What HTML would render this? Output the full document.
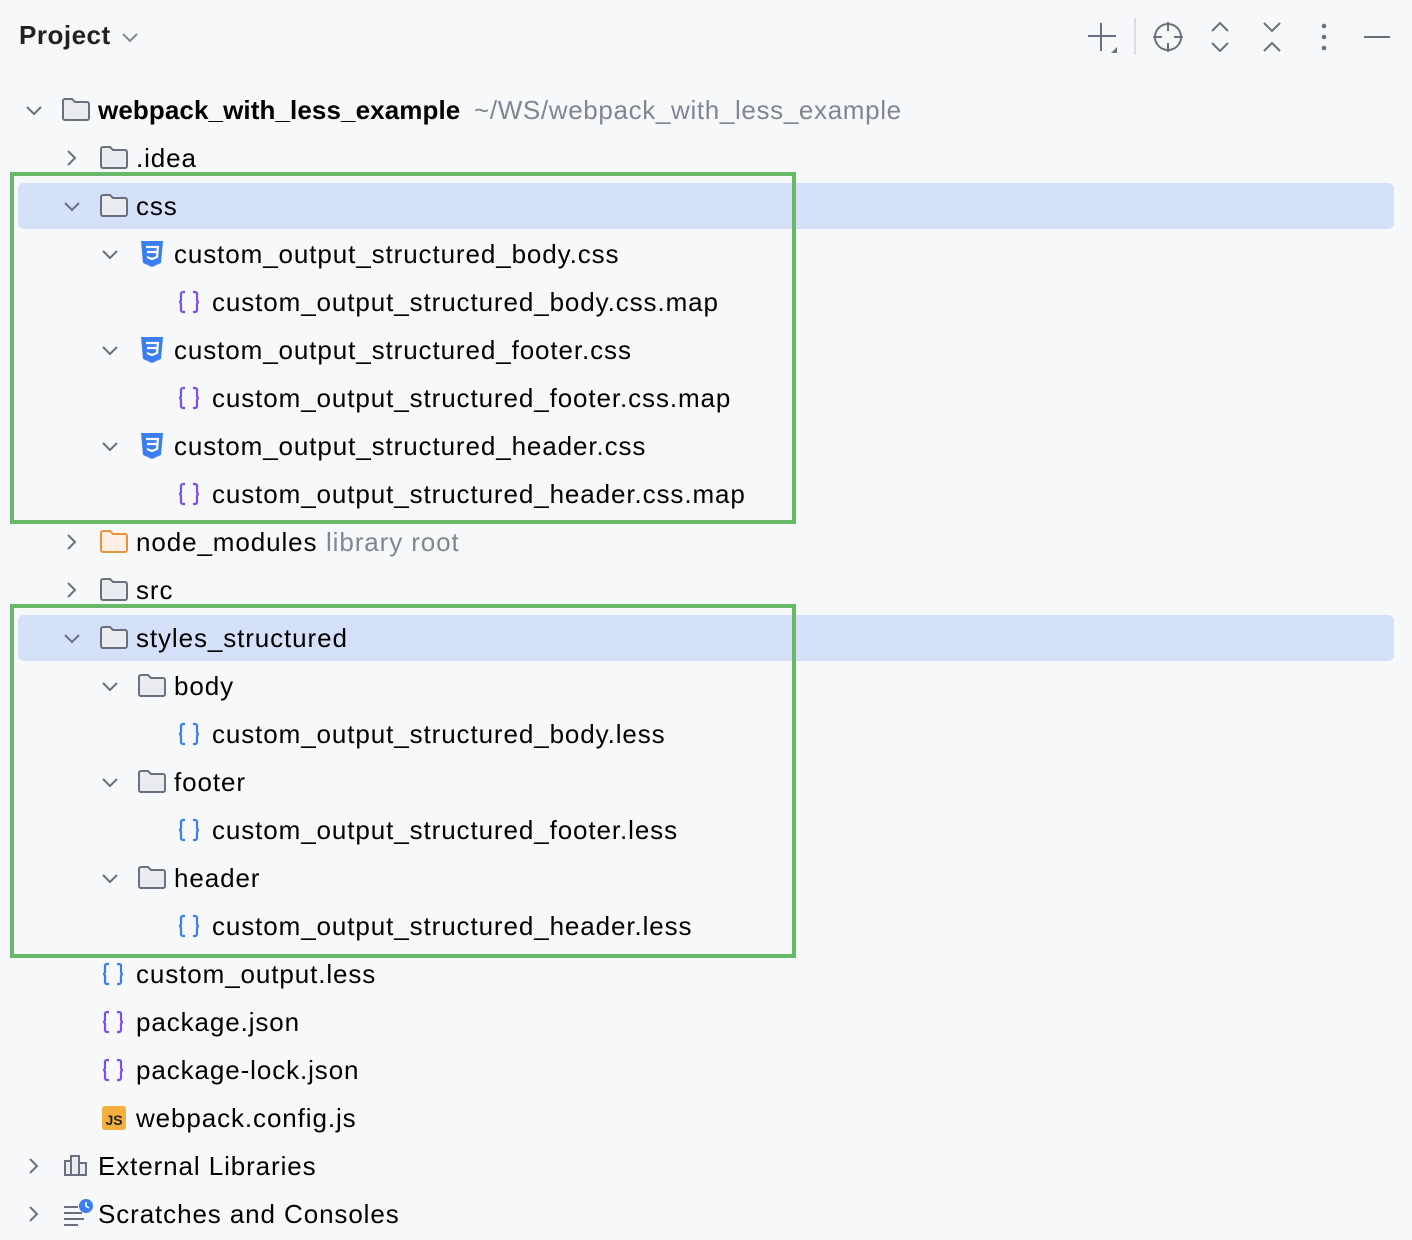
<!DOCTYPE html>
<html><head><meta charset="utf-8"><style>
body{margin:0;width:1412px;height:1240px;background:#f7f8fa;font-family:"Liberation Sans",sans-serif;position:relative;overflow:hidden;color:#000}
.r{position:absolute;left:0;height:48px;width:1412px}
.t{position:absolute;top:8px;font-size:26px;line-height:32px;white-space:nowrap;letter-spacing:0.9px}
.g{color:#818594}
svg{position:absolute}
.sel{position:absolute;left:18px;width:1376px;height:46px;background:#d5e0f9;border-radius:6px}
.box{position:absolute;left:10px;width:778px;border:4px solid #6ab96a}
</style></head><body>
<div style="position:absolute;left:19px;top:20px;font-size:26px;font-weight:bold;color:#222;letter-spacing:0.5px">Project</div>
<svg style="left:121px;top:30px" width="18" height="14" viewBox="0 0 18 14"><path d="M2 4l7 7 7-7" fill="none" stroke="#818594" stroke-width="2"/></svg>
<svg style="left:1080px;top:15px" width="340" height="40" viewBox="0 0 340 40">
<g fill="none" stroke="#6c707e" stroke-width="2">
<path d="M21 8v28M8 21h28"/>
<circle cx="88" cy="22" r="13"/><path d="M88 7v9M88 28v9M73 22h9M94 22h9"/>
<path d="M132 16l8-8 8 8M132 28l8 8 8-8"/>
<path d="M184 8l8 8 8-8M184 36l8-8 8 8"/>
<path d="M284 22h26"/>
</g>
<path d="M55 3v42" stroke="#dcdee3" stroke-width="2"/>
<path d="M37 32v6h-6z" fill="#6c707e"/>
<circle cx="244" cy="11" r="2.3" fill="#6c707e"/><circle cx="244" cy="22" r="2.3" fill="#6c707e"/><circle cx="244" cy="33" r="2.3" fill="#6c707e"/>
</svg>

<div class="sel" style="top:183px"></div>
<div class="sel" style="top:615px"></div>
<div class="box" style="top:172px;height:344px"></div>
<div class="box" style="top:604px;height:346px"></div>

<svg width="0" height="0" style="position:absolute">
<defs>
<g id="chd"><path d="M2 5l7 7 7-7" fill="none" stroke="#6c707e" stroke-width="2"/></g>
<g id="chr"><path d="M5 2l7 7-7 7" fill="none" stroke="#6c707e" stroke-width="2"/></g>
<g id="fold"><path d="M2 5a2 2 0 0 1 2-2h7l3 3h12a2 2 0 0 1 2 2v14a2 2 0 0 1-2 2H4a2 2 0 0 1-2-2z" fill="#ebecf0" stroke="#6c707e" stroke-width="2"/></g>
<g id="ofold"><path d="M2 5a2 2 0 0 1 2-2h7l3 3h12a2 2 0 0 1 2 2v14a2 2 0 0 1-2 2H4a2 2 0 0 1-2-2z" fill="#fdf0e3" stroke="#e8943f" stroke-width="2"/></g>
<g id="css"><path d="M2 1h22l-2 22-9 4-9-4z" fill="#3b7ef0"/><path d="M7 7h12l-1 10-5 2-5-2M8 12h10" fill="none" stroke="#fff" stroke-width="2.2"/></g>
<g id="br"><path d="M8 3h-2a2 2 0 0 0-2 2v6a2 2 0 0 1-2 2 2 2 0 0 1 2 2v6a2 2 0 0 0 2 2h2M16 3h2a2 2 0 0 1 2 2v6a2 2 0 0 0 2 2 2 2 0 0 0-2 2v6a2 2 0 0 1-2 2h-2" fill="none" stroke-width="2.2"/></g>
</defs></svg>

<div class="r" style="top:86px"><svg style="left:25px;top:16px" width="18" height="18"><use href="#chd"/></svg><svg style="left:61px;top:10px" width="30" height="28"><use href="#fold"/></svg><span class="t" style="left:98px;font-weight:bold;letter-spacing:0.1px">webpack_with_less_example</span><span class="t g" style="left:474px;letter-spacing:0.65px">~/WS/webpack_with_less_example</span></div>
<div class="r" style="top:134px"><svg style="left:63px;top:15px" width="18" height="18"><use href="#chr"/></svg><svg style="left:99px;top:10px" width="30" height="28"><use href="#fold"/></svg><span class="t" style="left:136px">.idea</span></div>
<div class="r" style="top:182px"><svg style="left:63px;top:16px" width="18" height="18"><use href="#chd"/></svg><svg style="left:99px;top:10px" width="30" height="28"><use href="#fold"/></svg><span class="t" style="left:136px">css</span></div>
<div class="r" style="top:230px"><svg style="left:101px;top:16px" width="18" height="18"><use href="#chd"/></svg><svg style="left:139px;top:10px" width="26" height="28"><use href="#css"/></svg><span class="t" style="left:174px">custom_output_structured_body.css</span></div>
<div class="r" style="top:278px"><svg style="left:177px;top:11px" width="26" height="28" stroke="#7c4ef0"><use href="#br"/></svg><span class="t" style="left:212px">custom_output_structured_body.css.map</span></div>
<div class="r" style="top:326px"><svg style="left:101px;top:16px" width="18" height="18"><use href="#chd"/></svg><svg style="left:139px;top:10px" width="26" height="28"><use href="#css"/></svg><span class="t" style="left:174px">custom_output_structured_footer.css</span></div>
<div class="r" style="top:374px"><svg style="left:177px;top:11px" width="26" height="28" stroke="#7c4ef0"><use href="#br"/></svg><span class="t" style="left:212px">custom_output_structured_footer.css.map</span></div>
<div class="r" style="top:422px"><svg style="left:101px;top:16px" width="18" height="18"><use href="#chd"/></svg><svg style="left:139px;top:10px" width="26" height="28"><use href="#css"/></svg><span class="t" style="left:174px">custom_output_structured_header.css</span></div>
<div class="r" style="top:470px"><svg style="left:177px;top:11px" width="26" height="28" stroke="#7c4ef0"><use href="#br"/></svg><span class="t" style="left:212px">custom_output_structured_header.css.map</span></div>
<div class="r" style="top:518px"><svg style="left:63px;top:15px" width="18" height="18"><use href="#chr"/></svg><svg style="left:99px;top:10px" width="30" height="28"><use href="#ofold"/></svg><span class="t" style="left:136px">node_modules</span><span class="t g" style="left:326px">library root</span></div>
<div class="r" style="top:566px"><svg style="left:63px;top:15px" width="18" height="18"><use href="#chr"/></svg><svg style="left:99px;top:10px" width="30" height="28"><use href="#fold"/></svg><span class="t" style="left:136px">src</span></div>
<div class="r" style="top:614px"><svg style="left:63px;top:16px" width="18" height="18"><use href="#chd"/></svg><svg style="left:99px;top:10px" width="30" height="28"><use href="#fold"/></svg><span class="t" style="left:136px">styles_structured</span></div>
<div class="r" style="top:662px"><svg style="left:101px;top:16px" width="18" height="18"><use href="#chd"/></svg><svg style="left:137px;top:10px" width="30" height="28"><use href="#fold"/></svg><span class="t" style="left:174px">body</span></div>
<div class="r" style="top:710px"><svg style="left:177px;top:11px" width="26" height="28" stroke="#3b7ef0"><use href="#br"/></svg><span class="t" style="left:212px">custom_output_structured_body.less</span></div>
<div class="r" style="top:758px"><svg style="left:101px;top:16px" width="18" height="18"><use href="#chd"/></svg><svg style="left:137px;top:10px" width="30" height="28"><use href="#fold"/></svg><span class="t" style="left:174px">footer</span></div>
<div class="r" style="top:806px"><svg style="left:177px;top:11px" width="26" height="28" stroke="#3b7ef0"><use href="#br"/></svg><span class="t" style="left:212px">custom_output_structured_footer.less</span></div>
<div class="r" style="top:854px"><svg style="left:101px;top:16px" width="18" height="18"><use href="#chd"/></svg><svg style="left:137px;top:10px" width="30" height="28"><use href="#fold"/></svg><span class="t" style="left:174px">header</span></div>
<div class="r" style="top:902px"><svg style="left:177px;top:11px" width="26" height="28" stroke="#3b7ef0"><use href="#br"/></svg><span class="t" style="left:212px">custom_output_structured_header.less</span></div>
<div class="r" style="top:950px"><svg style="left:101px;top:11px" width="26" height="28" stroke="#3b7ef0"><use href="#br"/></svg><span class="t" style="left:136px">custom_output.less</span></div>
<div class="r" style="top:998px"><svg style="left:101px;top:11px" width="26" height="28" stroke="#7c4ef0"><use href="#br"/></svg><span class="t" style="left:136px">package.json</span></div>
<div class="r" style="top:1046px"><svg style="left:101px;top:11px" width="26" height="28" stroke="#7c4ef0"><use href="#br"/></svg><span class="t" style="left:136px">package-lock.json</span></div>
<div class="r" style="top:1094px"><div style="position:absolute;left:102px;top:12px;width:24px;height:24px;background:#f4af3d;border-radius:3px;font-size:14px;font-weight:bold;line-height:28px;text-align:center;color:#222">JS</div><span class="t" style="left:136px">webpack.config.js</span></div>
<div class="r" style="top:1142px"><svg style="left:25px;top:15px" width="18" height="18"><use href="#chr"/></svg><svg style="left:62px;top:10px" width="30" height="28"><path d="M3 9h6v14H3zM9 4h8v19H9zM17 11h7v12h-7z" fill="#ebecf0" stroke="#6c707e" stroke-width="2"/></svg><span class="t" style="left:98px">External Libraries</span></div>
<div class="r" style="top:1190px"><svg style="left:25px;top:15px" width="18" height="18"><use href="#chr"/></svg><svg style="left:62px;top:8px" width="32" height="30"><path d="M2 9h14M2 15h18M2 21h20M2 27h14" stroke="#6c707e" stroke-width="2"/><circle cx="24" cy="8" r="7" fill="#3b7ef0"/><path d="M24 4v4l3 2" stroke="#fff" stroke-width="1.6" fill="none"/></svg><span class="t" style="left:98px">Scratches and Consoles</span></div>
</body></html>
